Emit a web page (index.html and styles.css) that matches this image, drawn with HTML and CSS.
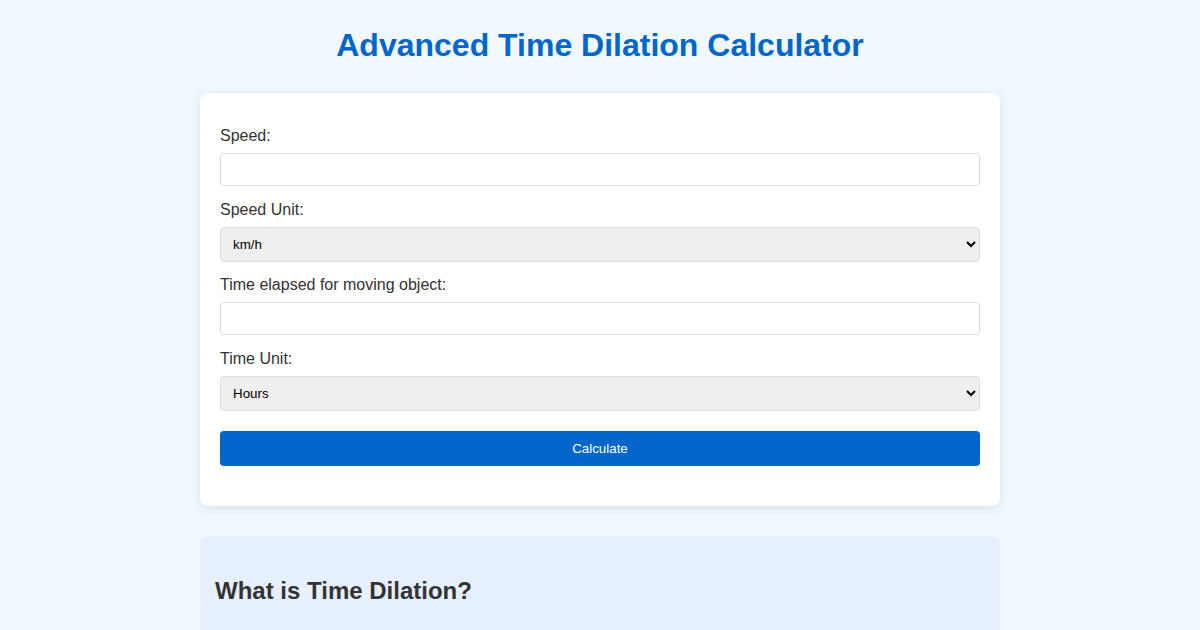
FILE: index.html
```html
<!DOCTYPE html>
<html>
<head>
    <title>Advanced Time Dilation Calculator</title>
    <link rel="stylesheet" href="styles.css">
</head>
<body>
    <div class="container">
        <h1>Advanced Time Dilation Calculator</h1>

        <div class="calculator">
            <label for="speed">Speed:</label>
            <input type="number" id="speed">

            <label for="speedUnit">Speed Unit:</label>
            <select id="speedUnit">
                <option value="kmh">km/h</option>
                <option value="ms">m/s</option>
                <option value="c">Fraction of c</option>
            </select>

            <label for="time">Time elapsed for moving object:</label>
            <input type="number" id="time">

            <label for="timeUnit">Time Unit:</label>
            <select id="timeUnit">
                <option value="hours">Hours</option>
                <option value="days">Days</option>
                <option value="years">Years</option>
            </select>

            <button class="calc-button">Calculate</button>
        </div>

        <div class="info">
            <h2>What is Time Dilation?</h2>
        </div>
    </div>
</body>
</html>
```

FILE: styles.css
```css
body {
    font-family: "Liberation Sans", Arial, sans-serif;
    background-color: #f0f7ff;
    color: #333;
    margin: 0;
    padding: 0 20px;
}

.container {
    max-width: 800px;
    margin: 0 auto;
}

h1 {
    color: #0066cc;
    text-align: center;
    font-size: 32px;
    margin: 27px 0 29px;
}

.calculator {
    background-color: #fff;
    border-radius: 8px;
    box-shadow: 0 2px 10px rgba(0, 0, 0, 0.1);
    padding: 34px 20px 40px;
}

label {
    display: block;
    font-size: 16px;
    margin-bottom: 8px;
}

input,
select {
    display: block;
    width: 100%;
    box-sizing: border-box;
    padding: 8px;
    border: 1px solid #ddd;
    border-radius: 4px;
    margin-bottom: 14px;
    font-family: "Liberation Sans", Arial, sans-serif;
    font-size: 13.33px;
}

input {
    margin-bottom: 15px;
}

select {
    background-color: #efefef;
    color: #000;
}

.calc-button {
    display: block;
    width: 100%;
    margin-top: 20px;
    padding: 10px;
    border: none;
    border-radius: 4px;
    background-color: #0066cc;
    color: #fff;
    font-family: "Liberation Sans", Arial, sans-serif;
    font-size: 13.33px;
    cursor: pointer;
}

.info {
    margin-top: 30px;
    background-color: #e6f0fd;
    border-radius: 8px;
    padding: 21px 15px;
}

.info h2 {
    font-size: 24px;
    margin: 20px 0;
}
```
